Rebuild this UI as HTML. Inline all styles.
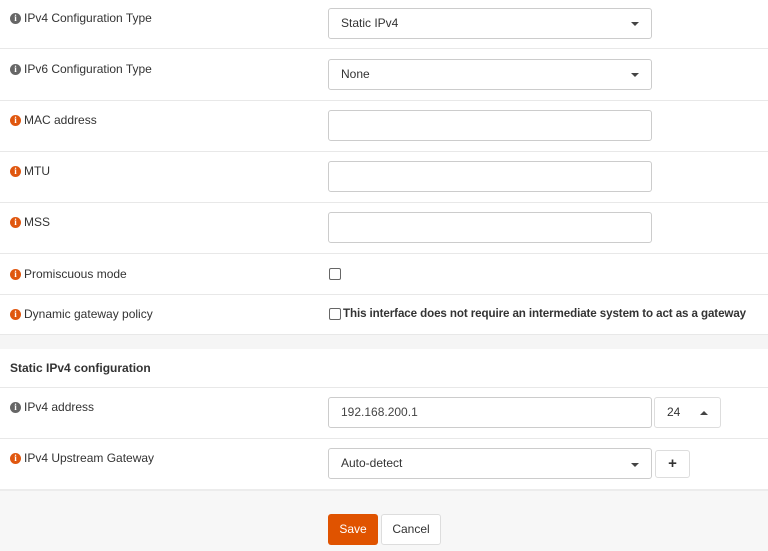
<!DOCTYPE html>
<html><head><style>
body{margin:0;width:768px;height:551px;position:relative;background:#fff;font-family:"Liberation Sans",sans-serif;font-size:12px;color:#333;overflow:hidden}
.a{position:absolute}
.line{position:absolute;left:0;width:768px;height:1px;background:#e8e8e8}
.lbl{position:absolute;left:10px;display:flex;align-items:center;font-size:12px;color:#333}
.ic{width:11px;height:11px;border-radius:50%;color:#fff;font:bold 9px "Liberation Serif",serif;display:inline-flex;align-items:center;justify-content:center;margin-right:3px}
.g{background:#666}.o{background:#e0570f}
.box{position:absolute;left:328px;width:324px;height:29px;border:1px solid #ccc;border-radius:3px;background:#fff;box-sizing:border-box}
.sel{padding-left:12px;line-height:27px}
.caret{position:absolute;right:12px;top:12px;width:0;height:0;border-left:4px solid transparent;border-right:4px solid transparent;border-top:4px solid #444}
.up{border-top:none;border-bottom:4px solid #444}
.cb{position:absolute;width:10px;height:10px;border:1px solid #666;border-radius:2px;background:#fff}
</style></head><body>
<div class="lbl" style="top:11px"><span class="ic g">i</span>IPv4 Configuration Type</div>
<div class="box sel" style="top:8px;height:31px;line-height:29px">Static IPv4<span class="caret" style="top:13px"></span></div>
<div class="line" style="top:48px"></div>
<div class="lbl" style="top:62px"><span class="ic g">i</span>IPv6 Configuration Type</div>
<div class="box sel" style="top:59px;height:31px;line-height:29px">None<span class="caret" style="top:13px"></span></div>
<div class="line" style="top:100px"></div>
<div class="lbl" style="top:113px"><span class="ic o">i</span>MAC address</div>
<div class="box" style="top:110px;height:31px"></div>
<div class="line" style="top:151px"></div>
<div class="lbl" style="top:164px"><span class="ic o">i</span>MTU</div>
<div class="box" style="top:161px;height:31px"></div>
<div class="line" style="top:202px"></div>
<div class="lbl" style="top:215px"><span class="ic o">i</span>MSS</div>
<div class="box" style="top:212px;height:31px"></div>
<div class="line" style="top:253px"></div>
<div class="lbl" style="top:267px"><span class="ic o">i</span>Promiscuous mode</div>
<div class="cb" style="left:329px;top:268px"></div>
<div class="line" style="top:294px"></div>
<div class="lbl" style="top:307px"><span class="ic o">i</span>Dynamic gateway policy</div>
<div class="cb" style="left:329px;top:308px"></div>
<div class="a" style="left:343px;top:307px;font-weight:bold;color:#333;font-size:11.6px;letter-spacing:-0.1px;white-space:nowrap">This interface does not require an intermediate system to act as a gateway</div>
<div class="a" style="left:0;top:334px;width:768px;height:15px;background:#f5f5f5;border-top:1px solid #e8e8e8;box-sizing:border-box"></div>
<div class="a" style="left:10px;top:361px;font-weight:bold">Static IPv4 configuration</div>
<div class="line" style="top:387px"></div>
<div class="lbl" style="top:400px"><span class="ic g">i</span>IPv4 address</div>
<div class="box sel" style="top:397px;height:31px;line-height:29px;color:#444">192.168.200.1</div>
<div class="box sel" style="left:654px;width:67px;top:397px;height:31px;line-height:29px;border-color:#ddd">24<span class="caret up" style="top:13px"></span></div>
<div class="line" style="top:438px"></div>
<div class="lbl" style="top:451px"><span class="ic o">i</span>IPv4 Upstream Gateway</div>
<div class="box sel" style="top:448px;height:31px;line-height:29px">Auto-detect<span class="caret" style="top:14px"></span></div>
<div class="box" style="left:655px;width:35px;top:450px;height:28px;border-color:#ddd;text-align:center;font-weight:bold;font-size:15px;line-height:25px">+</div>
<div class="a" style="left:0;top:489px;width:768px;height:62px;background:#f7f7f7;border-top:2px solid #ececec;box-sizing:border-box"></div>
<div class="a" style="left:328px;top:514px;width:50px;height:31px;background:#e05300;border-radius:3px;color:#fff;text-align:center;line-height:31px">Save</div>
<div class="a" style="left:381px;top:514px;width:60px;height:31px;background:#fff;border:1px solid #ddd;border-radius:3px;box-sizing:border-box;text-align:center;line-height:29px">Cancel</div>
</body></html>
